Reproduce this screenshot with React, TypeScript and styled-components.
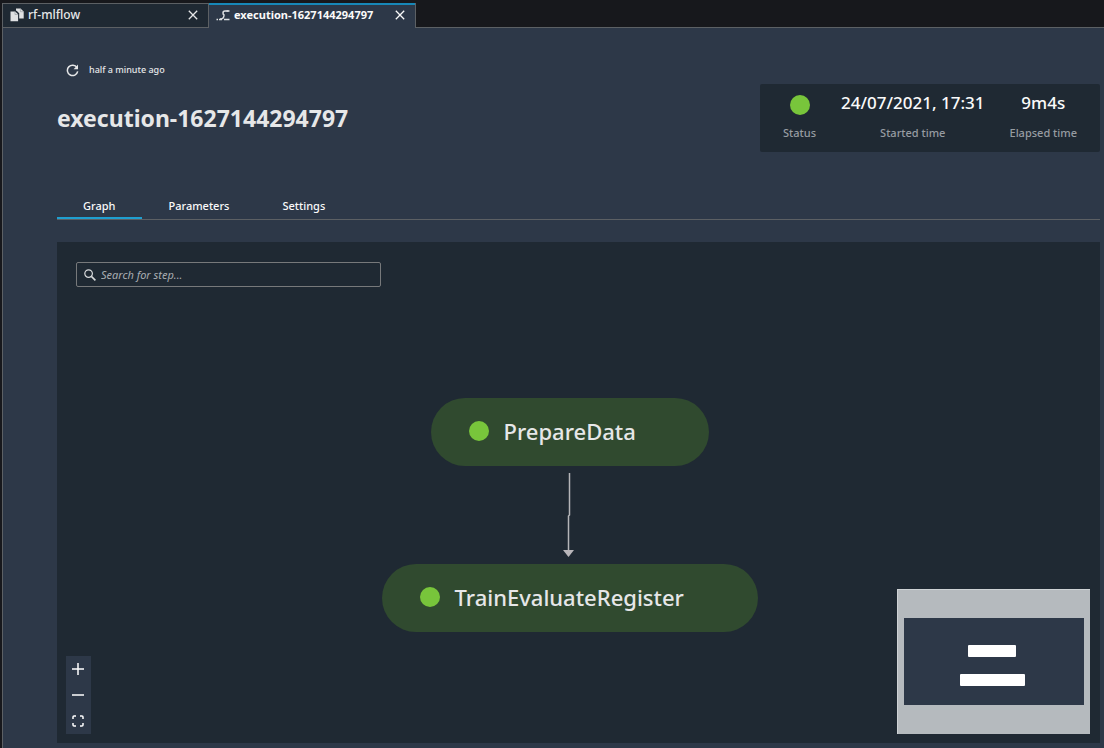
import React from "react";
import styled, { createGlobalStyle } from "styled-components";

const color = {
  chrome: "#17181c",
  surface: "#2d3848",
  panel: "#1f2933",
  line: "#5c6064",
  text: "#e6e7e8",
  bright: "#fafafa",
  muted: "#979ca2",
  accent: "#1f9fd0",
  success: "#78c53b",
  node: "#304a2f",
};

const GlobalStyle = createGlobalStyle`
  *, *::before, *::after { box-sizing: border-box; }
  body {
    margin: 0;
    background: ${color.chrome};
    color: ${color.text};
    font-family: "Noto Sans", "Open Sans", sans-serif;
    font-size: 11px;
    line-height: 16px;
  }
  button, input { font: inherit; color: inherit; }
  button { margin: 0; padding: 0; border: 0; background: none; cursor: pointer; }
`;

const Shell = styled.div`
  display: flex;
  flex-direction: column;
  min-height: 100vh;
  padding: 3px 0 0 2px;
`;

const DocumentBar = styled.header`
  display: flex;
  height: 25px;
`;

const DocumentTab = styled.div<{ $active?: boolean }>`
  display: flex;
  align-items: center;
  width: ${(p) => (p.$active ? 208 : 206)}px;
  padding: 0 9px 1px 7px;
  border: solid ${color.line};
  border-width: ${(p) => (p.$active ? "0 1px" : "1px 0 1px 1px")};
  background: ${(p) => (p.$active ? color.surface : color.panel)};
  box-shadow: ${(p) => (p.$active ? `inset 0 2px 0 #1788b8` : "none")};
  color: ${(p) => (p.$active ? color.bright : color.text)};
`;

const DocumentName = styled.span<{ $active?: boolean }>`
  flex: 1;
  margin-left: 4px;
  font-size: ${(p) => (p.$active ? 11 : 12)}px;
  font-weight: ${(p) => (p.$active ? 700 : 500)};
  white-space: nowrap;
`;

const CloseButton = styled.button`
  display: flex;
  align-items: center;
  justify-content: center;
  width: 12px;
  height: 16px;
`;

const BarRest = styled.div`
  flex: 1;
  border-bottom: 1px solid ${color.line};
`;

const Page = styled.main`
  display: flex;
  flex: 1;
  flex-direction: column;
  padding: 34px 4px 5px 54px;
  border-left: 1px solid ${color.line};
  background: ${color.surface};
`;

const Header = styled.div`
  display: flex;
  align-items: flex-start;
  justify-content: space-between;
`;

const Refresh = styled.div`
  display: flex;
  align-items: center;
  gap: 10px;
  height: 16px;
  padding-left: 9px;
  font-size: 9px;
  font-weight: 500;
`;

const IconButton = styled.button`
  display: flex;
`;

const Title = styled.h1`
  margin: 24px 0 0;
  font-size: 23px;
  line-height: 32px;
  font-weight: 700;
`;

const Summary = styled.dl`
  display: flex;
  justify-content: space-between;
  width: 340px;
  height: 68px;
  margin: 22px 0 0;
  padding: 9px 23px 0;
  border-radius: 2px;
  background: ${color.panel};
`;

const Stat = styled.div`
  display: flex;
  flex-direction: column-reverse;
  justify-content: flex-end;
  align-items: center;
  gap: 12px;
`;

const StatLabel = styled.dt`
  color: ${color.muted};
  font-weight: 500;
`;

const StatValue = styled.dd`
  display: flex;
  align-items: center;
  height: 20px;
  margin: 0;
  color: ${color.bright};
  font-size: 17px;
  font-weight: 500;
`;

const Dot = styled.span`
  flex: none;
  width: 20px;
  height: 20px;
  border-radius: 50%;
  background: ${color.success};
`;

const StatusDot = styled(Dot)`
  margin-top: 4px;
`;

const Tabs = styled.nav`
  display: flex;
  height: 28px;
  margin-top: 40px;
  border-bottom: 1px solid ${color.line};
`;

const Tab = styled.button<{ $active?: boolean }>`
  height: 27px;
  padding: 2px 27px 0 26px;
  border-bottom: 2px solid ${(p) => (p.$active ? color.accent : "transparent")};
  color: ${color.bright};
  font-weight: 500;
`;

const Canvas = styled.section`
  position: relative;
  flex: 1;
  min-height: 501px;
  margin-top: 22px;
  padding: 20px 19px;
  background: ${color.panel};
`;

const Search = styled.label`
  display: flex;
  align-items: center;
  gap: 5px;
  width: 305px;
  height: 25px;
  padding: 0 7px;
  border: 1px solid #77797b;
  border-radius: 2px;
`;

const SearchInput = styled.input`
  flex: 1;
  min-width: 0;
  padding: 0;
  border: 0;
  outline: 0;
  background: none;
  &::placeholder {
    color: #a9adb1;
    font-style: italic;
    opacity: 1;
  }
`;

const StepNode = styled.div<{ $top: number; $width: number }>`
  position: absolute;
  top: ${(p) => p.$top}px;
  left: calc(50% - 9px);
  display: flex;
  align-items: center;
  gap: 15px;
  width: ${(p) => p.$width}px;
  height: 68px;
  padding: 0 0 2px 38px;
  border-radius: 34px;
  background: ${color.node};
  font-size: 22px;
  line-height: 32px;
  font-weight: 500;
  transform: translateX(-50%);
`;

const Edge = styled.svg`
  position: absolute;
  top: 231px;
  left: calc(50% - 17px);
`;

const ZoomControls = styled.div`
  position: absolute;
  bottom: 9px;
  left: 9px;
  display: flex;
  flex-direction: column;
  background: ${color.surface};
`;

const ZoomButton = styled.button`
  display: flex;
  align-items: center;
  justify-content: center;
  width: 25px;
  height: 26px;
  padding-right: 1px;
`;

const MiniMap = styled.div`
  position: absolute;
  right: 10px;
  bottom: 9px;
  display: flex;
  align-items: center;
  width: 193px;
  height: 145px;
  padding: 0 6px 2px;
  border: solid #ced2d5;
  border-width: 1px 0 0 1px;
  background: #b5babe;
`;

const MiniView = styled.div`
  display: flex;
  flex: 1;
  flex-direction: column;
  align-items: center;
  justify-content: center;
  gap: 17px;
  height: 87px;
  padding: 8px 4px 0 0;
  background: ${color.surface};
`;

const MiniNode = styled.span<{ $width: number }>`
  width: ${(p) => p.$width}px;
  height: 12px;
  border-radius: 1px;
  background: #ffffff;
`;

const CloseIcon = () => (
  <svg width="10" height="10" viewBox="0 0 10 10" stroke="currentColor" strokeWidth="1.3" aria-hidden="true">
    <path d="M.8.8l8.4 8.4M9.2.8L.8 9.2" />
  </svg>
);

const PagesIcon = () => (
  <svg width="14" height="14" viewBox="0 0 14 14" fill="#dfe1e3" aria-hidden="true">
    <path d="M6 .5h4.500l3.200 3V10.500H9.200V5.200L6.600 2.800H6z" />
    <path d="M.5 3.500h4.600l3 2.800V13.200H.5z" />
    <path d="M10.400.5v3.200h3.300M5 3.500v3h3.100" fill="none" stroke="#8d949b" strokeWidth=".6" />
  </svg>
);

const PipelineIcon = () => (
  <svg width="14" height="12" viewBox="0 0 14 12" fill="none" stroke="#dfe1e3" aria-hidden="true">
    <path d="M12.500 2H9Q7 2 7 4Q7 5.500 8 6Q7.800 9.800 5 10H4" strokeWidth="1.500" />
    <path d="M10.500 2h3M.5 10.500h1.500M3 10.500h3M8 10.500h5.500" strokeWidth="1.700" />
  </svg>
);

const RefreshIcon = () => (
  <svg width="13" height="13" viewBox="0 0 13 13" fill="none" stroke="currentColor" strokeWidth="1.500" aria-hidden="true">
    <path d="M11 3.600A5.200 5.200 0 1 0 11.700 7.400" />
    <path d="M12 .6V5.200H7.600z" fill="currentColor" stroke="none" />
  </svg>
);

const SearchIcon = () => (
  <svg width="12" height="12" viewBox="0 0 12 12" fill="none" stroke="#d8dadc" aria-hidden="true">
    <circle cx="4.600" cy="4.600" r="3.800" strokeWidth="1.200" />
    <path d="M7.400 7.400l4 4" strokeWidth="1.600" />
  </svg>
);

const zoomPaths = {
  "Zoom in": "M6 0v12M0 6h12",
  "Zoom out": "M0 6h12",
  "Fit to screen": "M1 4V2Q1 1 2 1h2M8 1h2q1 0 1 1v2M11 8v2q0 1-1 1H8M4 11H2q-1 0-1-1V8",
};

const documents = [
  { name: "rf-mlflow", Icon: PagesIcon, active: false },
  { name: "execution-1627144294797", Icon: PipelineIcon, active: true },
];

export default function App() {
  return (
    <>
      <GlobalStyle />
      <Shell>
        <DocumentBar>
          {documents.map(({ name, Icon, active }) => (
            <DocumentTab key={name} $active={active}>
              <Icon />
              <DocumentName $active={active}>{name}</DocumentName>
              <CloseButton aria-label={`Close ${name}`}>
                <CloseIcon />
              </CloseButton>
            </DocumentTab>
          ))}
          <BarRest />
        </DocumentBar>
        <Page>
          <Header>
            <div>
              <Refresh>
                <IconButton aria-label="Refresh">
                  <RefreshIcon />
                </IconButton>
                <span>half a minute ago</span>
              </Refresh>
              <Title>execution-1627144294797</Title>
            </div>
            <Summary>
              <Stat>
                <StatLabel>Status</StatLabel>
                <StatValue>
                  <StatusDot role="img" aria-label="Succeeded" />
                </StatValue>
              </Stat>
              <Stat>
                <StatLabel>Started time</StatLabel>
                <StatValue>24/07/2021, 17:31</StatValue>
              </Stat>
              <Stat>
                <StatLabel>Elapsed time</StatLabel>
                <StatValue>9m4s</StatValue>
              </Stat>
            </Summary>
          </Header>
          <Tabs>
            <Tab $active>Graph</Tab>
            <Tab>Parameters</Tab>
            <Tab>Settings</Tab>
          </Tabs>
          <Canvas>
            <Search>
              <SearchIcon />
              <SearchInput type="text" aria-label="Search for step" placeholder="Search for step..." />
            </Search>
            <StepNode $top={156} $width={278}>
              <Dot />
              PrepareData
            </StepNode>
            <Edge width="14" height="85" viewBox="0 0 14 85" aria-hidden="true">
              <path d="M7.500 0V42L6.500 43V78" fill="none" stroke="#b4b5b8" strokeWidth="1.500" />
              <path d="M1 77h11l-5.500 7z" fill="#b9b6ba" />
            </Edge>
            <StepNode $top={322} $width={376}>
              <Dot />
              TrainEvaluateRegister
            </StepNode>
            <ZoomControls>
              {Object.entries(zoomPaths).map(([label, d]) => (
                <ZoomButton key={label} aria-label={label}>
                  <svg width="12" height="12" viewBox="0 0 12 12" fill="none" stroke="#ffffff" strokeWidth="1.500" aria-hidden="true">
                    <path d={d} />
                  </svg>
                </ZoomButton>
              ))}
            </ZoomControls>
            <MiniMap>
              <MiniView>
                <MiniNode $width={48} />
                <MiniNode $width={65} />
              </MiniView>
            </MiniMap>
          </Canvas>
        </Page>
      </Shell>
    </>
  );
}
